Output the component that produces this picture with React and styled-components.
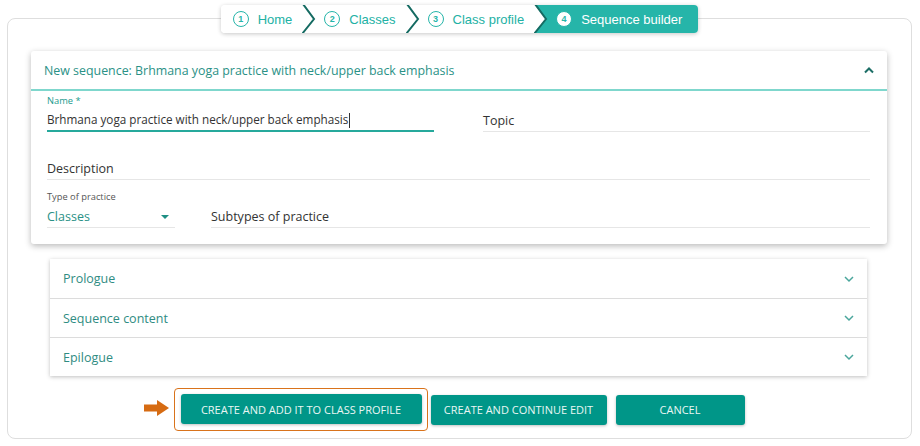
import React from "react";
import styled, { createGlobalStyle } from "styled-components";

const GlobalStyle = createGlobalStyle`
  html, body {
    margin: 0;
    padding: 0;
    background: #fff;
  }
  body {
    font-family: "Open Sans", "Liberation Sans", sans-serif;
  }
  * {
    box-sizing: border-box;
  }
`;

const Page = styled.div`
  width: 920px;
  height: 446px;
  padding: 5px 8px 0 7px;
  display: flex;
  flex-direction: column;
`;

const StepperRow = styled.div`
  display: flex;
  justify-content: center;
  position: relative;
  z-index: 1;
`;

const Stepper = styled.nav`
  display: flex;
  height: 28px;
  background: #fff;
  border-radius: 4px;
  box-shadow: 0 1px 4px rgba(0, 0, 0, 0.22);
  overflow: hidden;
  font-family: "Liberation Sans", Arial, sans-serif;
`;

const Step = styled.div`
  display: flex;
  align-items: center;
  gap: 9px;
  padding-left: ${({ first }) => (first ? "12px" : "8px")};
  padding-right: ${({ active }) => (active ? "16px" : "10px")};
  background: ${({ active }) => (active ? "#26b5a9" : "#fff")};
  color: ${({ active }) => (active ? "#fff" : "#22b1a4")};
  font-size: 13px;
  white-space: nowrap;
`;

const StepNum = styled.span`
  width: 16px;
  height: 16px;
  border-radius: 50%;
  display: flex;
  align-items: center;
  justify-content: center;
  font-size: 9px;
  font-weight: 700;
  border: 1px solid #26b5a9;
  background: ${({ active }) => (active ? "#fff" : "transparent")};
  color: #26b5a9;
`;

const Separator = ({ nextActive }) => (
  <svg width="14" height="28" viewBox="0 0 14 28" style={{ display: "block" }}>
    {nextActive && <polygon points="1,0 14,0 14,28 0,28 12,14" fill="#26b5a9" />}
    <polyline
      points="1,-1 12,14 0,29"
      fill="none"
      stroke="#156b62"
      strokeWidth="2"
    />
  </svg>
);

const Panel = styled.div`
  margin-top: -15px;
  height: 421px;
  border: 1px solid #dedede;
  border-radius: 8px;
  padding: 32px 24px 0 23px;
  display: flex;
  flex-direction: column;
`;

const Card = styled.section`
  background: #fff;
  border-radius: 3px;
  box-shadow: 0 2px 6px rgba(0, 0, 0, 0.28);
`;

const CardHeader = styled.div`
  height: 40px;
  display: flex;
  align-items: center;
  justify-content: space-between;
  padding: 0 12px 0 13px;
  border-bottom: 2px solid #7fd7cd;
  color: #2a9186;
  font-size: 12.4px;
`;

const FormBody = styled.div`
  padding: 3px 17px 16px 16px;
  display: flex;
  flex-direction: column;
  gap: 10px;
`;

const Row = styled.div`
  display: grid;
  grid-template-columns: ${({ cols }) => cols};
  gap: ${({ gap }) => gap || "49px"};
`;

const Field = styled.div`
  display: flex;
  flex-direction: column;
`;

const Label = styled.div`
  height: 14px;
  line-height: 14px;
  font-size: 9.3px;
  color: ${({ focused }) => (focused ? "#229a8e" : "#555")};
`;

const InputLine = styled.div`
  height: 24px;
  display: flex;
  align-items: center;
  justify-content: space-between;
  font-size: ${({ small }) => (small ? "11.7px" : "12.5px")};
  color: ${({ teal }) => (teal ? "#2a9186" : "#333")};
  border-bottom: ${({ focused }) =>
    focused ? "2px solid #26a99c" : "1px solid #e6e6e6"};
  padding-top: ${({ focused }) => (focused ? "1px" : "2px")};
`;

const Caret = styled.span`
  width: 0;
  height: 0;
  border-left: 4px solid transparent;
  border-right: 4px solid transparent;
  border-top: 4px solid #1f8f84;
  margin-right: 6px;
`;

const Cursor = styled.span`
  display: inline-block;
  width: 1px;
  height: 15px;
  background: #333;
  vertical-align: middle;
  margin-left: 1px;
`;

const Accordion = styled.div`
  margin: 15px 20px 0 19px;
  background: #fff;
  box-shadow: 0 1px 4px rgba(0, 0, 0, 0.25);
`;

const AccordionRow = styled.div`
  height: 39px;
  display: flex;
  align-items: center;
  justify-content: space-between;
  padding: 0 12px 0 13px;
  color: #2f8c82;
  font-size: 12.5px;
  border-top: ${({ first }) => (first ? "none" : "1px solid #dcdcdc")};
`;

const Actions = styled.div`
  margin-top: 12px;
  display: flex;
  justify-content: center;
  align-items: center;
  gap: 9px;
`;

const Highlight = styled.div`
  position: relative;
  border: 1px solid #d9731b;
  border-radius: 4px;
  padding: 5px 5px 6px 6px;
  margin-right: -6px;
`;

const Arrow = styled.svg`
  position: absolute;
  left: -31px;
  top: 11px;
`;

const Button = styled.button`
  width: ${({ w }) => w}px;
  height: 30px;
  border: none;
  border-radius: 3px;
  background: #009688;
  color: #eaf6f4;
  font-family: "Open Sans", "Liberation Sans", sans-serif;
  font-size: 11px;
  text-transform: uppercase;
  box-shadow: 0 1px 3px rgba(0, 0, 0, 0.25);
  cursor: pointer;
`;

const Chevron = ({ up, color }) => (
  <svg width="12" height="8" viewBox="0 0 12 8">
    <polyline
      points={up ? "2,6.5 6,2.5 10,6.5" : "2,2 6,6 10,2"}
      fill="none"
      stroke={color}
      strokeWidth={up ? 2 : 1.5}
    />
  </svg>
);

const steps = ["Home", "Classes", "Class profile", "Sequence builder"];
const sections = ["Prologue", "Sequence content", "Epilogue"];

export default function App() {
  return (
    <>
      <GlobalStyle />
      <Page>
        <StepperRow>
          <Stepper>
            {steps.map((s, i) => (
              <React.Fragment key={s}>
                {i > 0 && <Separator nextActive={i === steps.length - 1} />}
                <Step first={i === 0} active={i === steps.length - 1}>
                  <StepNum active={i === steps.length - 1}>{i + 1}</StepNum>
                  {s}
                </Step>
              </React.Fragment>
            ))}
          </Stepper>
        </StepperRow>
        <Panel>
          <Card>
            <CardHeader>
              New sequence: Brhmana yoga practice with neck/upper back emphasis
              <Chevron up color="#1c6e66" />
            </CardHeader>
            <FormBody>
              <Row cols="1fr 1fr">
                <Field>
                  <Label focused>Name *</Label>
                  <InputLine focused small>
                    <span>
                      Brhmana yoga practice with neck/upper back emphasis
                      <Cursor />
                    </span>
                  </InputLine>
                </Field>
                <Field>
                  <Label />
                  <InputLine>Topic</InputLine>
                </Field>
              </Row>
              <Row cols="1fr">
                <Field>
                  <Label />
                  <InputLine>Description</InputLine>
                </Field>
              </Row>
              <Row cols="128px 1fr" gap="36px">
                <Field>
                  <Label>Type of practice</Label>
                  <InputLine teal>
                    Classes
                    <Caret />
                  </InputLine>
                </Field>
                <Field>
                  <Label />
                  <InputLine>Subtypes of practice</InputLine>
                </Field>
              </Row>
            </FormBody>
          </Card>
          <Accordion>
            {sections.map((s, i) => (
              <AccordionRow key={s} first={i === 0}>
                {s}
                <Chevron color="#4aa69c" />
              </AccordionRow>
            ))}
          </Accordion>
          <Actions>
            <Highlight>
              <Arrow width="25" height="16" viewBox="0 0 25 16">
                <polygon points="0,4.5 13,4.5 13,0 25,8 13,16 13,11.5 0,11.5" fill="#d66b12" />
              </Arrow>
              <Button w={241}>Create and add it to class profile</Button>
            </Highlight>
            <Button w={176}>Create and continue edit</Button>
            <Button w={129}>Cancel</Button>
          </Actions>
        </Panel>
      </Page>
    </>
  );
}
